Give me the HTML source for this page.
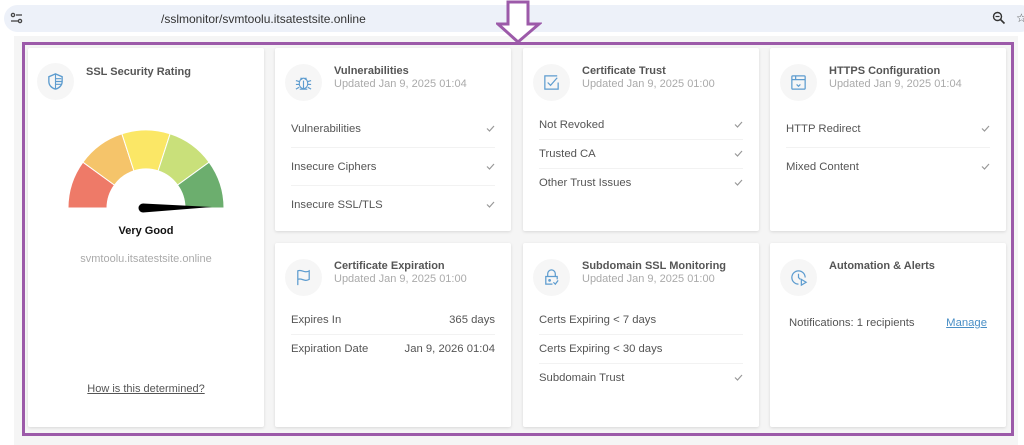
<!DOCTYPE html>
<html><head><meta charset="utf-8"><style>
*{box-sizing:border-box;margin:0;padding:0}
body{width:1024px;height:445px;overflow:hidden;background:#fff;font-family:"Liberation Sans",Arial,sans-serif;position:relative}
.bar{position:absolute;left:4px;top:5px;width:1030px;height:27px;background:#edf1f9;border-radius:14px}
.url{position:absolute;left:161px;top:12px;font-size:12px;color:#333}
.bg{position:absolute;left:14px;top:36px;width:1004px;height:409px;background:#f5f5f5}
.frame{position:absolute;left:22px;top:42px;width:992px;height:394px;border:3px solid #9c5aa9}
.card{position:absolute;background:#fff;box-shadow:0 1px 3px rgba(0,0,0,.12);border-radius:2px}
.ic{position:absolute;left:10px;top:16px;width:37px;height:37px;border-radius:50%;background:#f6f6f6}
.ic svg{position:absolute;left:9px;top:9px}
.t{position:absolute;left:59px;top:17px;font-size:11px;font-weight:bold;color:#555}
.u{position:absolute;left:59px;top:30px;font-size:11px;color:#aaa}
.row{position:absolute;left:16px;right:16px;font-size:11.3px;color:#555;height:1px}
.row span{position:absolute;top:-6px}
.row .r{right:0}
.ck{position:absolute;right:0;top:-4px;width:9px;height:7px}
.sep{position:absolute;left:16px;right:16px;height:1px;background:#f2f2f2}
</style></head><body>
<div class="bar"></div>
<svg style="position:absolute;left:10px;top:12px" width="14" height="12" viewBox="0 0 14 12"><g stroke="#444" stroke-width="1.3" fill="none"><circle cx="3" cy="3" r="1.6"/><line x1="6" y1="3" x2="12" y2="3"/><circle cx="10" cy="9" r="1.6"/><line x1="1" y1="9" x2="8" y2="9"/></g></svg>
<div class="url">/sslmonitor/svmtoolu.itsatestsite.online</div>
<svg style="position:absolute;left:992px;top:11px" width="14" height="14" viewBox="0 0 14 14"><circle cx="5.5" cy="5.5" r="4" stroke="#333" stroke-width="1.4" fill="none"/><line x1="3.5" y1="5.5" x2="7.5" y2="5.5" stroke="#333" stroke-width="1.2"/><line x1="8.5" y1="8.5" x2="12.5" y2="12.5" stroke="#333" stroke-width="1.6"/></svg>
<div style="position:absolute;left:1016px;top:11px;font-size:12px;color:#555">☆</div>
<div class="bg"></div>
<div class="frame"></div>
<svg style="position:absolute;left:496px;top:0" width="46" height="44" viewBox="0 0 46 44"><path d="M12 2 H32 V24 H43 L22 42 L2 24 H12 Z" fill="#fff" stroke="#9c5aa9" stroke-width="3" stroke-linejoin="miter"/></svg>

<svg width="0" height="0" style="position:absolute"><defs><symbol id="ck" viewBox="0 0 9 7"><path d="M1 3.5 L3.5 6 L8 1" fill="none" stroke="#999" stroke-width="1.2"/></symbol></defs></svg>

<!-- left card -->
<div class="card" style="left:28px;top:48px;width:236px;height:379px">
 <div class="ic" style="left:9px;top:15px"><svg width="19" height="19" viewBox="0 0 20 20"><path d="M10 2 L17 5 V10 C17 14 14 17 10 18 C6 17 3 14 3 10 V5 Z" fill="none" stroke="#5d9ccf" stroke-width="1.4"/><path d="M10 2 V18 M10 7 H16 M10 10 H17 M10 13 H16" stroke="#5d9ccf" stroke-width="1.2"/></svg></div>
 <div class="t" style="left:58px;top:18px">SSL Security Rating</div>
 <svg style="position:absolute;left:38px;top:80px" width="160" height="90" viewBox="-80 -80 160 90">
  <g stroke="#fff" stroke-width="1">
  <path d="M-78 0 A78 78 0 0 1 -63.1 -45.8 L-31.5 -22.9 A39 39 0 0 0 -39 0 Z" fill="#ee7a68"/>
  <path d="M-63.1 -45.8 A78 78 0 0 1 -24.1 -74.2 L-12.1 -37.1 A39 39 0 0 0 -31.5 -22.9 Z" fill="#f5c46a"/>
  <path d="M-24.1 -74.2 A78 78 0 0 1 24.1 -74.2 L12.1 -37.1 A39 39 0 0 0 -12.1 -37.1 Z" fill="#fbe766"/>
  <path d="M24.1 -74.2 A78 78 0 0 1 63.1 -45.8 L31.5 -22.9 A39 39 0 0 0 12.1 -37.1 Z" fill="#c9e07a"/>
  <path d="M63.1 -45.8 A78 78 0 0 1 78 0 L39 0 A39 39 0 0 0 31.5 -22.9 Z" fill="#6cae6e"/>
  </g>
  <path d="M-3 -4.5 L66 -1 L-3 4.5 A4.5 4.5 0 0 1 -3 -4.5 Z" fill="#000"/>
 </svg>
 <div style="position:absolute;left:0;width:236px;top:177px;text-align:center;font-size:11px;font-weight:bold;color:#111">Very Good</div>
 <div style="position:absolute;left:0;width:236px;top:205px;text-align:center;font-size:11px;color:#aaa">svmtoolu.itsatestsite.online</div>
 <div style="position:absolute;left:0;width:236px;top:335px;text-align:center;font-size:11px;color:#555;text-decoration:underline">How is this determined?</div>
</div>

<!-- Vulnerabilities -->
<div class="card" style="left:275px;top:48px;width:236px;height:183px">
 <div class="ic"><svg width="19" height="19" viewBox="0 0 20 20" fill="none" stroke="#5d9ccf" stroke-width="1.2"><ellipse cx="10" cy="11" rx="4.5" ry="5.5"/><path d="M7 5 L8.5 7 M13 5 L11.5 7 M10 8 V16 M5.5 9 L2 8 M5.5 12 H2 M5.5 15 L2 17 M14.5 9 L18 8 M14.5 12 H18 M14.5 15 L18 17 M6 17 H14"/></svg></div>
 <div class="t">Vulnerabilities</div><div class="u">Updated Jan 9, 2025 01:04</div>
 <div class="row" style="top:81px"><span>Vulnerabilities</span><svg class="ck"><use href="#ck"/></svg></div>
 <div class="sep" style="top:99px"></div>
 <div class="row" style="top:119px"><span>Insecure Ciphers</span><svg class="ck"><use href="#ck"/></svg></div>
 <div class="sep" style="top:137px"></div>
 <div class="row" style="top:157px"><span>Insecure SSL/TLS</span><svg class="ck"><use href="#ck"/></svg></div>
</div>

<!-- Certificate Trust -->
<div class="card" style="left:523px;top:48px;width:236px;height:183px">
 <div class="ic"><svg width="19" height="19" viewBox="0 0 20 20" fill="none" stroke="#5d9ccf" stroke-width="1.3"><path d="M16 3 H3 V17 H17 V10"/><path d="M6 10 L9 13 L16 5"/></svg></div>
 <div class="t">Certificate Trust</div><div class="u">Updated Jan 9, 2025 01:00</div>
 <div class="row" style="top:77px"><span>Not Revoked</span><svg class="ck"><use href="#ck"/></svg></div>
 <div class="sep" style="top:91px"></div>
 <div class="row" style="top:106px"><span>Trusted CA</span><svg class="ck"><use href="#ck"/></svg></div>
 <div class="sep" style="top:120px"></div>
 <div class="row" style="top:135px"><span>Other Trust Issues</span><svg class="ck"><use href="#ck"/></svg></div>
</div>

<!-- HTTPS -->
<div class="card" style="left:770px;top:48px;width:236px;height:183px">
 <div class="ic"><svg width="19" height="19" viewBox="0 0 20 20" fill="none" stroke="#5d9ccf" stroke-width="1.3"><rect x="3" y="3" width="14" height="14" rx="1"/><path d="M3 7 H17 M7 3 V7 M8 12 L10 14 L12 12"/></svg></div>
 <div class="t">HTTPS Configuration</div><div class="u">Updated Jan 9, 2025 01:04</div>
 <div class="row" style="top:81px"><span>HTTP Redirect</span><svg class="ck"><use href="#ck"/></svg></div>
 <div class="sep" style="top:99px"></div>
 <div class="row" style="top:119px"><span>Mixed Content</span><svg class="ck"><use href="#ck"/></svg></div>
</div>

<!-- Expiration -->
<div class="card" style="left:275px;top:243px;width:236px;height:184px">
 <div class="ic"><svg width="19" height="19" viewBox="0 0 20 20" fill="none" stroke="#5d9ccf" stroke-width="1.3"><path d="M4 18 V3 C8 1 11 6 16 3 V12 C11 15 8 10 4 12"/></svg></div>
 <div class="t">Certificate Expiration</div><div class="u">Updated Jan 9, 2025 01:00</div>
 <div class="row" style="top:77px"><span>Expires In</span><span class="r">365 days</span></div>
 <div class="sep" style="top:91px"></div>
 <div class="row" style="top:106px"><span>Expiration Date</span><span class="r">Jan 9, 2026 01:04</span></div>
</div>

<!-- Subdomain -->
<div class="card" style="left:523px;top:243px;width:236px;height:184px">
 <div class="ic"><svg width="19" height="19" viewBox="0 0 20 20" fill="none" stroke="#5d9ccf" stroke-width="1.3"><path d="M6 9 V6 A4 4 0 0 1 14 6 V9"/><path d="M11 17 H4 V9 H16 V12"/><circle cx="8" cy="13" r=".8"/><path d="M12 15 L14 17 L17 13"/></svg></div>
 <div class="t">Subdomain SSL Monitoring</div><div class="u">Updated Jan 9, 2025 01:00</div>
 <div class="row" style="top:77px"><span>Certs Expiring &lt; 7 days</span></div>
 <div class="sep" style="top:91px"></div>
 <div class="row" style="top:106px"><span>Certs Expiring &lt; 30 days</span></div>
 <div class="sep" style="top:120px"></div>
 <div class="row" style="top:135px"><span>Subdomain Trust</span><svg class="ck"><use href="#ck"/></svg></div>
</div>

<!-- Automation -->
<div class="card" style="left:770px;top:243px;width:236px;height:184px">
 <div class="ic"><svg width="19" height="19" viewBox="0 0 20 20" fill="none" stroke="#5d9ccf" stroke-width="1.3"><path d="M17 10 A7 7 0 1 0 10 17"/><path d="M10 6 V10 L12 12"/><path d="M13 12 L18 15 L13 18 Z"/></svg></div>
 <div class="t">Automation &amp; Alerts</div>
 <div class="row" style="top:80px;left:19px;right:19px"><span>Notifications: 1 recipients</span><span class="r" style="color:#4a8fc6;text-decoration:underline">Manage</span></div>
</div>
</body></html>
